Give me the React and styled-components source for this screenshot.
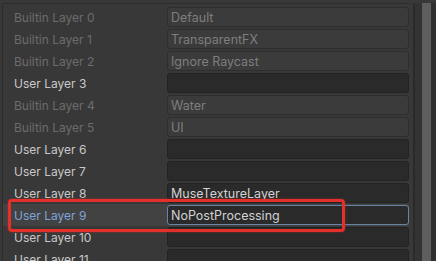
import React from "react";
import styled, { createGlobalStyle } from "styled-components";

const Global = createGlobalStyle`
  html, body { margin: 0; padding: 0; background: #383838; }
  body { font-family: Inter, "Noto Sans", sans-serif; -webkit-font-smoothing: antialiased; }
`;

const Frame = styled.div`
  position: relative;
  width: 436px;
  height: 261px;
  overflow: hidden;
  background: #383838;
  display: flex;
`;

const Panel = styled.div`
  flex: 1;
  margin: 3px 0 0 2px;
  border-left: 1px solid #2c2c2c;
  border-top: 1px solid #2c2c2c;
  padding-top: 2px;
  display: flex;
  flex-direction: column;
`;

const Row = styled.div`
  flex-shrink: 0;
  display: grid;
  grid-template-columns: 153px 242px;
  align-items: center;
  height: 22px;
  padding-left: 11px;
  background: ${(p) => (p.$selected ? "#424242" : "transparent")};
`;

const Label = styled.span`
  font-size: 12px;
  color: ${(p) => (p.$selected ? "#7fa2d6" : p.$builtin ? "#6c6c6c" : "#c8c8c8")};
  white-space: nowrap;
`;

const Field = styled.div`
  height: 20px;
  box-sizing: border-box;
  border-radius: 3px;
  border: 1px solid
    ${(p) => (p.$selected ? "#6a83a5" : p.$builtin ? "#2e2e2e" : "#222222")};
  background: ${(p) => (p.$builtin ? "#3b3b3b" : "#2a2a2a")};
  color: ${(p) => (p.$builtin ? "#7e7e7e" : "#d2d2d2")};
  font-size: 12.5px;
  padding-left: 3px;
  display: flex;
  align-items: center;
  white-space: nowrap;
`;

const Gutter = styled.div`
  width: 27px;
  margin-top: 3px;
  display: flex;
`;

const Divider = styled.div`
  width: 2px;
  margin-left: 4px;
  background: #2a2a2a;
`;

const Track = styled.div`
  width: 7px;
  background: #333333;
`;

const Thumb = styled.div`
  width: 9px;
  background: #5e5e5e;
`;

const Edge = styled.div`
  flex: 1;
  background: #2f2f2f;
`;

const Highlight = styled.div`
  position: absolute;
  left: 8px;
  top: 199px;
  width: 337px;
  height: 33px;
  box-sizing: border-box;
  border: 3px solid #e3302b;
  border-radius: 4px;
  box-shadow: 0 0 2px rgba(227, 48, 43, 0.6);
  pointer-events: none;
`;

const layers = [
  { name: "Builtin Layer 0", value: "Default", builtin: true },
  { name: "Builtin Layer 1", value: "TransparentFX", builtin: true },
  { name: "Builtin Layer 2", value: "Ignore Raycast", builtin: true },
  { name: "User Layer 3", value: "" },
  { name: "Builtin Layer 4", value: "Water", builtin: true },
  { name: "Builtin Layer 5", value: "UI", builtin: true },
  { name: "User Layer 6", value: "" },
  { name: "User Layer 7", value: "" },
  { name: "User Layer 8", value: "MuseTextureLayer" },
  { name: "User Layer 9", value: "NoPostProcessing", selected: true },
  { name: "User Layer 10", value: "" },
  { name: "User Layer 11", value: "" },
];

export default function App() {
  return (
    <>
      <Global />
      <Frame>
        <Panel>
          {layers.map((l) => (
            <Row key={l.name} $selected={l.selected}>
              <Label $builtin={l.builtin} $selected={l.selected}>
                {l.name}
              </Label>
              <Field $builtin={l.builtin} $selected={l.selected}>
                {l.value}
              </Field>
            </Row>
          ))}
        </Panel>
        <Gutter>
          <Divider />
          <Track />
          <Thumb />
          <Edge />
        </Gutter>
        <Highlight />
      </Frame>
    </>
  );
}
